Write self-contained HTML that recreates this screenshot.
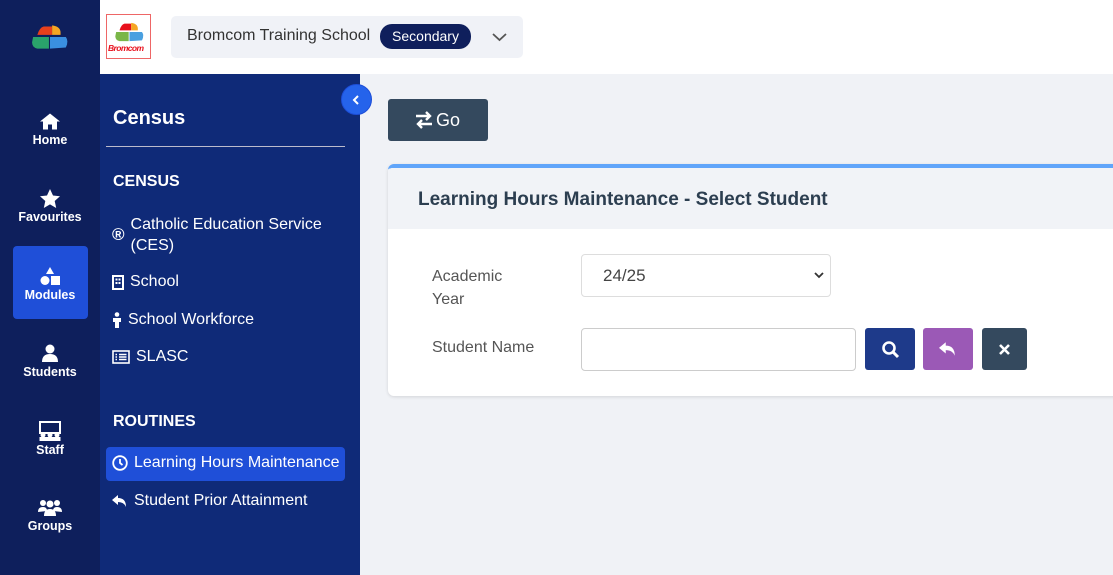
<!DOCTYPE html>
<html><head><style>
*{box-sizing:border-box;margin:0;padding:0}
body{width:1113px;height:575px;overflow:hidden;font-family:"Liberation Sans",sans-serif;background:#f0f2f6;position:relative}
.rail{position:absolute;left:0;top:0;width:100px;height:575px;background:#0e1f5c}
.ri{position:absolute;left:0;width:100px;text-align:center;color:#fff;font-size:12.5px;font-weight:bold}
.ri svg{display:block;margin:0 auto 2px}
.mod{position:absolute;left:13px;top:246px;width:75px;height:73px;background:#1f4fd8;border-radius:4px}
.top{position:absolute;left:100px;top:0;width:1013px;height:74px;background:#fff}
.side{position:absolute;left:100px;top:74px;width:260px;height:501px;background:#0f2a78;color:#fff}
.si{position:absolute;left:12px;font-size:16px;display:flex;align-items:center;gap:6px}
</style></head><body>
<div class="rail">
<svg style="position:absolute;left:31px;top:24px" width="38" height="26" viewBox="0 0 36 24"><path d="M12 2 L20 2 L20 10 L6 10 Q8 3 12 2Z" fill="#e8401c"/><path d="M20 1 Q28 2 28 8 L28 10 L20 10Z" fill="#f5a623"/><path d="M2 12 L17 12 L17 23 L6 23 Q1 22 1 17Z" fill="#2aa36b"/><path d="M18 12 L33 12 Q36 16 33 22 L18 23Z" fill="#3a8fe0"/></svg>
<div class="ri" style="top:112px"><svg width="22" height="19" viewBox="0 0 22 18"><path d="M11 1 L21 9 L18 9 L18 17 L13 17 L13 12 L9 12 L9 17 L4 17 L4 9 L1 9Z" fill="#fff"/></svg>Home</div>
<div class="mod"></div>
<div class="ri" style="top:189px"><svg width="20" height="19" viewBox="0 0 20 19"><path d="M10 0 L13 6.5 L20 7.2 L14.7 12 L16.2 19 L10 15.4 L3.8 19 L5.3 12 L0 7.2 L7 6.5Z" fill="#fff"/></svg>Favourites</div>
<div class="ri" style="top:267px"><svg width="20" height="19" viewBox="0 0 20 19"><path d="M10 0 L14 7 L6 7Z" fill="#fff"/><circle cx="5" cy="13.5" r="4.5" fill="#fff"/><rect x="11" y="9" width="9" height="9" fill="#fff"/></svg>Modules</div>
<div class="ri" style="top:344px"><svg width="18" height="19" viewBox="0 0 18 19"><circle cx="9" cy="5" r="4.5" fill="#fff"/><path d="M1 18 Q1 10 9 10 Q17 10 17 18Z" fill="#fff"/></svg>Students</div>
<div class="ri" style="top:421px"><svg width="24" height="20" viewBox="0 0 24 20"><rect x="2" y="1" width="20" height="11" fill="none" stroke="#fff" stroke-width="2"/><circle cx="5" cy="14" r="2.5" fill="#fff"/><circle cx="12" cy="14" r="2.5" fill="#fff"/><circle cx="19" cy="14" r="2.5" fill="#fff"/><rect x="1.5" y="16" width="7" height="4" fill="#fff"/><rect x="8.5" y="16" width="7" height="4" fill="#fff"/><rect x="15.5" y="16" width="7" height="4" fill="#fff"/></svg>Staff</div>
<div class="ri" style="top:498px"><svg width="24" height="19" viewBox="0 0 24 19"><circle cx="5" cy="5" r="3" fill="#fff"/><circle cx="19" cy="5" r="3" fill="#fff"/><circle cx="12" cy="6" r="3.5" fill="#fff"/><path d="M0 14 Q0 9 5 9 Q9 9 9 13Z M15 13 Q15 9 19 9 Q24 9 24 14Z M6 18 Q6 11 12 11 Q18 11 18 18Z" fill="#fff"/></svg>Groups</div>
</div>
<div class="top">
<div style="position:absolute;left:6px;top:14px;width:45px;height:45px;border:1px solid #e66;background:#fff">
<svg style="position:absolute;left:7px;top:7px" width="31" height="20" viewBox="0 0 36 24"><path d="M12 2 L20 2 L20 10 L6 10 Q8 3 12 2Z" fill="#e8101c"/><path d="M20 1 Q28 2 28 8 L28 10 L20 10Z" fill="#f5a623"/><path d="M2 12 L17 12 L17 23 L6 23 Q1 22 1 17Z" fill="#7ab648"/><path d="M18 12 L33 12 Q36 16 33 22 L18 23Z" fill="#4aa0e0"/></svg>
<div style="position:absolute;left:1px;top:28px;font-size:8.5px;color:#e8101c;font-style:italic;font-weight:bold;letter-spacing:-0.6px">Bromcom</div></div>
<div style="position:absolute;left:71px;top:16px;width:352px;height:42px;background:#f0f2f7;border-radius:5px">
<span style="position:absolute;left:16px;top:11px;font-size:16px;color:#333">Bromcom Training School</span>
<span style="position:absolute;left:209px;top:8px;height:25px;width:91px;background:#0f1f5c;border-radius:12px;color:#fff;font-size:14px;text-align:center;line-height:25px">Secondary</span>
<svg style="position:absolute;left:321px;top:16px" width="15" height="10" viewBox="0 0 15 10"><path d="M1 2 L7.5 8 L14 2" fill="none" stroke="#555" stroke-width="1.8"/></svg>
</div></div>
<div class="side">
<div style="position:absolute;left:13px;top:33px;font-size:20px;font-weight:bold">Census</div>
<div style="position:absolute;left:6px;top:72px;width:239px;height:1px;background:#bbc"></div>
<div style="position:absolute;left:13px;top:99px;font-size:16px;font-weight:bold">CENSUS</div>
<div class="si" style="top:140px;align-items:center"><span style="font-size:17px;font-weight:bold">®</span><span style="line-height:21px">Catholic Education Service<br>(CES)</span></div>
<div class="si" style="top:199px"><svg width="12" height="15" viewBox="0 0 12 15"><rect x="1" y="1" width="10" height="13" fill="none" stroke="#fff" stroke-width="2"/><rect x="3.5" y="3.5" width="2" height="2" fill="#fff"/><rect x="6.5" y="3.5" width="2" height="2" fill="#fff"/><rect x="3.5" y="7" width="2" height="2" fill="#fff"/><rect x="6.5" y="7" width="2" height="2" fill="#fff"/></svg>School</div>
<div class="si" style="top:237px"><svg width="10" height="16" viewBox="0 0 10 16"><circle cx="5" cy="2.5" r="2.3" fill="#fff"/><path d="M1 6 H9 V10 H7 V16 H3 V10 H1Z" fill="#fff"/></svg>School Workforce</div>
<div class="si" style="top:274px"><svg width="18" height="14" viewBox="0 0 18 14"><rect x="1" y="1" width="16" height="12" fill="none" stroke="#fff" stroke-width="1.6"/><path d="M3.5 4.5H5M7 4.5H14.5M3.5 7H5M7 7H14.5M3.5 9.5H5M7 9.5H14.5" stroke="#fff" stroke-width="1.4"/></svg>SLASC</div>
<div style="position:absolute;left:13px;top:339px;font-size:16px;font-weight:bold">ROUTINES</div>
<div style="position:absolute;left:6px;top:373px;width:239px;height:34px;background:#1f4fd8;border-radius:4px"></div>
<div class="si" style="top:380px"><svg width="16" height="16" viewBox="0 0 16 16"><circle cx="8" cy="8" r="6.8" fill="none" stroke="#fff" stroke-width="1.8"/><path d="M8 4 V8 L10.5 10" fill="none" stroke="#fff" stroke-width="1.8"/></svg>Learning Hours Maintenance</div>
<div class="si" style="top:418px"><svg width="16" height="14" viewBox="0 0 16 14"><path d="M6 1 L0 6 L6 11 L6 8 Q12 8 14 13 Q14 4 6 4Z" fill="#fff"/></svg>Student Prior Attainment</div>
</div>
<div style="position:absolute;left:341px;top:84px;width:31px;height:31px;border-radius:50%;background:#2563eb;border:1px solid #1d4ed8"><svg style="position:absolute;left:10px;top:9px" width="9" height="12" viewBox="0 0 9 12"><path d="M6 2 L2 6 L6 10" fill="none" stroke="#fff" stroke-width="2"/></svg></div>
<div style="position:absolute;left:388px;top:99px;width:100px;height:42px;background:#34495e;border-radius:3px;color:#fff;font-size:18px;line-height:42px;padding-left:26px">
<svg style="position:absolute;left:26px;top:11px" width="20" height="20" viewBox="0 0 20 20"><path d="M2 6 H16 M12 2 L16 6 L12 10 M18 14 H4 M8 10 L4 14 L8 18" fill="none" stroke="#fff" stroke-width="2.4"/></svg><span style="margin-left:22px">Go</span></div>
<div style="position:absolute;left:388px;top:164px;width:740px;height:232px;background:#fff;border-radius:6px;border-top:4px solid #60a5fa;box-shadow:0 1px 3px rgba(0,0,0,.12);overflow:hidden">
<div style="height:61px;background:#f1f3f7;padding:21px 30px;font-size:19px;font-weight:bold;color:#2c3e50">Learning Hours Maintenance - Select Student</div>
<div style="position:absolute;left:44px;top:97px;font-size:16px;color:#555;line-height:23px">Academic<br>Year</div>
<div style="position:absolute;left:193px;top:86px;width:250px;height:43px;border:1px solid #ddd;border-radius:4px;font-size:17px;color:#444;padding:11px 21px">24/25<svg style="position:absolute;left:232px;top:17px" width="10" height="7" viewBox="0 0 10 7"><path d="M1 1 L5 5 L9 1" fill="none" stroke="#333" stroke-width="1.8"/></svg></div>
<div style="position:absolute;left:44px;top:171px;font-size:16px;color:#555">Student Name</div>
<div style="position:absolute;left:193px;top:160px;width:275px;height:43px;border:1px solid #ccc;border-radius:4px"></div>
<div style="position:absolute;left:477px;top:160px;width:50px;height:42px;background:#1e3a8a;border-radius:3px"><svg style="position:absolute;left:16px;top:12px" width="19" height="19" viewBox="0 0 19 19"><circle cx="8" cy="8" r="5.5" fill="none" stroke="#fff" stroke-width="2.6"/><path d="M12 12 L17 17" stroke="#fff" stroke-width="3"/></svg></div>
<div style="position:absolute;left:535px;top:160px;width:50px;height:42px;background:#9b59b6;border-radius:3px"><svg style="position:absolute;left:16px;top:13px" width="18" height="16" viewBox="0 0 16 14"><path d="M6 1 L0 6 L6 11 L6 8 Q12 8 14 13 Q14 4 6 4Z" fill="#fff"/></svg></div>
<div style="position:absolute;left:594px;top:160px;width:45px;height:42px;background:#34495e;border-radius:3px"><svg style="position:absolute;left:17px;top:16px" width="11" height="11" viewBox="0 0 11 11"><path d="M1 1 L10 10 M10 1 L1 10" stroke="#fff" stroke-width="2.6"/></svg></div>
</div>
</body></html>
